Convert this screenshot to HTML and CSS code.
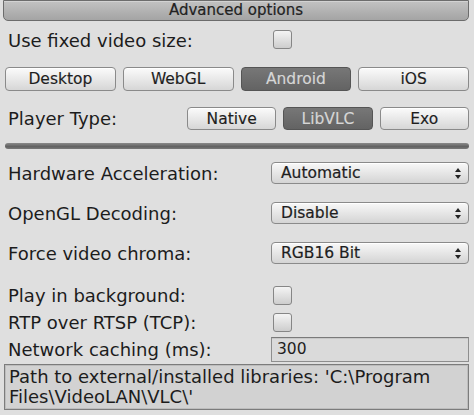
FILE: index.html
```html
<!DOCTYPE html>
<html>
<head>
<meta charset="utf-8">
<link rel="stylesheet" href="styles.css">
</head>
<body>
<div class="panel">
  <div class="header">Advanced options</div>

  <div class="row row-fixed">
    <div class="label">Use fixed video size:</div>
    <div class="control"><span class="checkbox"></span></div>
  </div>

  <div class="row row-platforms">
    <div class="btn">Desktop</div>
    <div class="btn">WebGL</div>
    <div class="btn active">Android</div>
    <div class="btn">iOS</div>
  </div>

  <div class="row row-player">
    <div class="label label-player">Player Type:</div>
    <div class="btn-group">
      <div class="btn">Native</div>
      <div class="btn active">LibVLC</div>
      <div class="btn">Exo</div>
    </div>
  </div>

  <div class="separator"></div>

  <div class="row row-dd first">
    <div class="label">Hardware Acceleration:</div>
    <div class="control"><div class="dropdown"><span>Automatic</span><svg class="arrows" width="6" height="11" viewBox="0 0 6 11"><path d="M3 0L6 4H0Z M3 11L6 7H0Z" fill="#222"/></svg></div></div>
  </div>

  <div class="row row-dd">
    <div class="label">OpenGL Decoding:</div>
    <div class="control"><div class="dropdown"><span>Disable</span><svg class="arrows" width="6" height="11" viewBox="0 0 6 11"><path d="M3 0L6 4H0Z M3 11L6 7H0Z" fill="#222"/></svg></div></div>
  </div>

  <div class="row row-dd">
    <div class="label">Force video chroma:</div>
    <div class="control"><div class="dropdown"><span>RGB16 Bit</span><svg class="arrows" width="6" height="11" viewBox="0 0 6 11"><path d="M3 0L6 4H0Z M3 11L6 7H0Z" fill="#222"/></svg></div></div>
  </div>

  <div class="row row-cb first-cb">
    <div class="label">Play in background:</div>
    <div class="control"><span class="checkbox"></span></div>
  </div>

  <div class="row row-cb second-cb">
    <div class="label">RTP over RTSP (TCP):</div>
    <div class="control"><span class="checkbox"></span></div>
  </div>

  <div class="row row-tf">
    <div class="label">Network caching (ms):</div>
    <div class="control"><div class="textfield">300</div></div>
  </div>

  <div class="helpbox">Path to external/installed libraries: 'C:\Program Files\VideoLAN\VLC\'</div>
</div>
</body>
</html>
```

FILE: styles.css
```css
html, body {
  margin: 0;
  padding: 0;
  background: #dfdfdf;
}
body {
  width: 474px;
  height: 415px;
  overflow: hidden;
  font-family: "DejaVu Sans", Verdana, sans-serif;
  color: #1c1c1c;
}
.panel {
  padding: 0 5px 0 5px;
  display: flex;
  flex-direction: column;
}
.header {
  margin-left: -2px;
  height: 19px;
  border: 1px solid #6c6c6c;
  border-radius: 0 0 5px 5px;
  background: linear-gradient(#c2c2c2, #a4a4a4);
  box-shadow: inset 0 1px 0 #d2d2d2;
  font-size: 15px;
  line-height: 19px;
  text-align: center;
  color: #222;
  -webkit-text-stroke: 0.2px #222;
}
.row {
  display: flex;
  align-items: center;
}
.label {
  font-size: 18px;
  width: 263px;
  padding-left: 3px;
  flex: none;
  white-space: nowrap;
}
.control {
  flex: 1;
  display: flex;
  align-items: center;
}
.row-fixed {
  margin-top: 8px;
  height: 20px;
}
.row-fixed .label { margin-top: 3px; }
.checkbox {
  display: block;
  margin-left: 2px;
  border: 1px solid #868686;
  border-radius: 3px;
  background: linear-gradient(#f4f4f4, #cdcdcd);
  box-sizing: border-box;
  width: 19px;
  height: 19px;
}
.btn {
  height: 24px;
  box-sizing: border-box;
  border: 1px solid #8a8a8a;
  border-radius: 4px;
  background: linear-gradient(#fbfbfb, #d6d6d6);
  box-shadow: inset 0 1px 0 #ffffff;
  font-size: 15.5px;
  line-height: 22px;
  text-align: center;
  color: #1e1e1e;
  -webkit-text-stroke: 0.15px #1e1e1e;
}
.btn.active {
  background: linear-gradient(#777777, #636363);
  border-color: #555555;
  box-shadow: none;
  color: #d6d6d6;
  -webkit-text-stroke: 0.15px #d6d6d6;
}
.row-platforms {
  margin-top: 18px;
  gap: 7px;
}
.row-platforms .btn {
  flex: 1;
}
.row-player {
  margin-top: 16px;
  height: 23px;
}
.label-player {
  width: 179px;
}
.btn-group {
  flex: 1;
  display: flex;
  gap: 7px;
}
.btn-group .btn {
  flex: 1;
  height: 23px;
}
.separator {
  margin-top: 13px;
  height: 6px;
  border-radius: 3px;
  background: linear-gradient(#8a8a8a, #626262 60%, #7a7a7a);
}
.row-dd {
  margin-top: 18px;
  height: 22px;
}
.row-dd.first {
  margin-top: 13px;
}
.dropdown {
  flex: 1;
  height: 22px;
  box-sizing: border-box;
  border: 1px solid #8a8a8a;
  border-radius: 4px;
  background: linear-gradient(#f8f8f8, #d4d4d4);
  box-shadow: inset 0 1px 0 #ffffff;
  display: flex;
  align-items: center;
  justify-content: space-between;
  padding: 0 7px 0 9px;
  font-size: 15.5px;
  color: #1e1e1e;
  -webkit-text-stroke: 0.2px #1e1e1e;
}
.arrows {
  display: block;
}
.row-cb {
  height: 18px;
}
.first-cb {
  margin-top: 22px;
}
.second-cb {
  margin-top: 9px;
}
.row-tf {
  margin-top: 6px;
  height: 25px;
}
.textfield {
  flex: 1;
  height: 25px;
  box-sizing: border-box;
  border: 1px solid #8e8e8e;
  border-top-color: #7a7a7a;
  background: #dadada;
  box-shadow: inset 0 1px 0 #c8c8c8;
  font-size: 15.5px;
  line-height: 23px;
  padding-left: 5px;
  color: #1e1e1e;
}
.helpbox {
  margin-top: 2px;
  margin-left: -1px;
  height: 46px;
  box-sizing: border-box;
  border: 1px solid #7c7c7c;
  box-shadow: inset 0 0 0 1px #bdbdbd;
  background: #d2d2d2;
  font-size: 18px;
  line-height: 20px;
  padding: 2px 4px 0 4px;
  color: #1c1c1c;
}
```
